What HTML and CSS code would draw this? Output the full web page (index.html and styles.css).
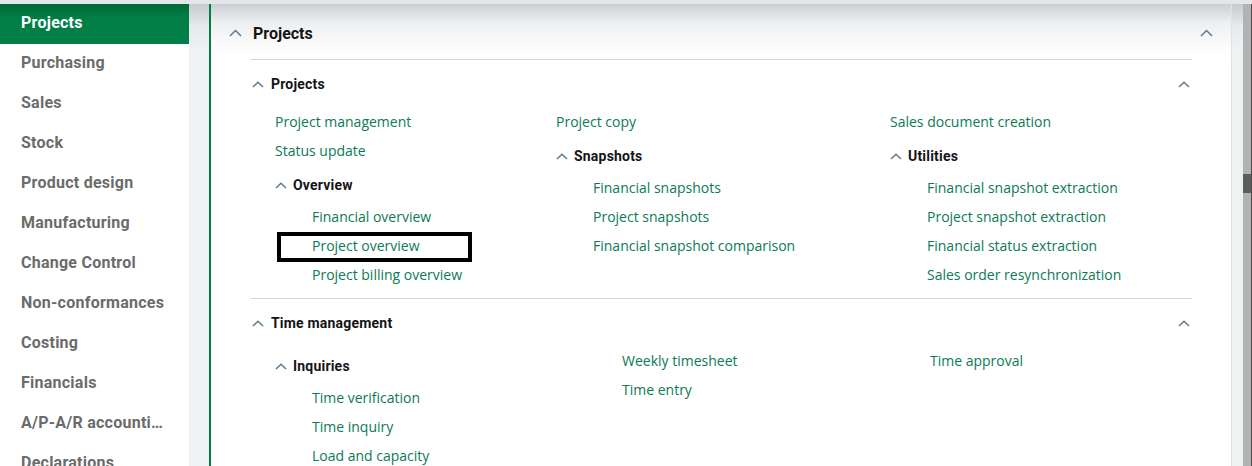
FILE: index.html
```html
<!DOCTYPE html>
<html lang="en">
<head>
    <meta charset="UTF-8">
    <meta name="viewport" content="width=device-width, initial-scale=1.0">
    <title>Projects</title>
    <link rel="stylesheet" href="styles.css">
</head>
<body>
    <div class="topbar"></div>
    <div class="app">
        <nav class="sidebar">
            <ul class="menu">
                <li class="menu-item active">Projects</li>
                <li class="menu-item">Purchasing</li>
                <li class="menu-item">Sales</li>
                <li class="menu-item">Stock</li>
                <li class="menu-item">Product design</li>
                <li class="menu-item">Manufacturing</li>
                <li class="menu-item">Change Control</li>
                <li class="menu-item">Non-conformances</li>
                <li class="menu-item">Costing</li>
                <li class="menu-item">Financials</li>
                <li class="menu-item">A/P-A/R accounting</li>
                <li class="menu-item">Declarations</li>
            </ul>
        </nav>

        <div class="workspace">
            <div class="panel">
                <div class="panel-header">
                    <svg class="chevron chevron-lg" viewBox="0 0 13 8"><polyline points="1,7 6.5,1.5 12,7"/></svg>
                    <span class="panel-title">Projects</span>
                    <svg class="chevron chevron-lg push-right" viewBox="0 0 13 8"><polyline points="1,7 6.5,1.5 12,7"/></svg>
                </div>

                <div class="panel-body">
                    <section class="module">
                        <div class="module-header">
                            <svg class="chevron" viewBox="0 0 12 7"><polyline points="1,6 6,1.2 11,6"/></svg>
                            <span class="module-title">Projects</span>
                            <svg class="chevron push-right" viewBox="0 0 12 7"><polyline points="1,6 6,1.2 11,6"/></svg>
                        </div>
                        <div class="module-grid grid-projects">
                            <div class="column">
                                <a class="link">Project management</a>
                                <a class="link">Status update</a>
                                <div class="group">
                                    <div class="group-header">
                                        <svg class="chevron" viewBox="0 0 12 7"><polyline points="1,6 6,1.2 11,6"/></svg>
                                        <span class="group-title">Overview</span>
                                    </div>
                                    <a class="link">Financial overview</a>
                                    <a class="link marked">Project overview</a>
                                    <a class="link">Project billing overview</a>
                                </div>
                            </div>
                            <div class="column">
                                <a class="link">Project copy</a>
                                <div class="group">
                                    <div class="group-header">
                                        <svg class="chevron" viewBox="0 0 12 7"><polyline points="1,6 6,1.2 11,6"/></svg>
                                        <span class="group-title">Snapshots</span>
                                    </div>
                                    <a class="link">Financial snapshots</a>
                                    <a class="link">Project snapshots</a>
                                    <a class="link">Financial snapshot comparison</a>
                                </div>
                            </div>
                            <div class="column">
                                <a class="link">Sales document creation</a>
                                <div class="group">
                                    <div class="group-header">
                                        <svg class="chevron" viewBox="0 0 12 7"><polyline points="1,6 6,1.2 11,6"/></svg>
                                        <span class="group-title">Utilities</span>
                                    </div>
                                    <a class="link">Financial snapshot extraction</a>
                                    <a class="link">Project snapshot extraction</a>
                                    <a class="link">Financial status extraction</a>
                                    <a class="link">Sales order resynchronization</a>
                                </div>
                            </div>
                        </div>
                    </section>

                    <section class="module">
                        <div class="module-header">
                            <svg class="chevron" viewBox="0 0 12 7"><polyline points="1,6 6,1.2 11,6"/></svg>
                            <span class="module-title">Time management</span>
                            <svg class="chevron push-right" viewBox="0 0 12 7"><polyline points="1,6 6,1.2 11,6"/></svg>
                        </div>
                        <div class="module-grid grid-time">
                            <div class="column">
                                <div class="group">
                                    <div class="group-header">
                                        <svg class="chevron" viewBox="0 0 12 7"><polyline points="1,6 6,1.2 11,6"/></svg>
                                        <span class="group-title">Inquiries</span>
                                    </div>
                                    <a class="link">Time verification</a>
                                    <a class="link">Time inquiry</a>
                                    <a class="link">Load and capacity</a>
                                </div>
                            </div>
                            <div class="column">
                                <a class="link">Weekly timesheet</a>
                                <a class="link">Time entry</a>
                            </div>
                            <div class="column">
                                <a class="link">Time approval</a>
                            </div>
                        </div>
                    </section>
                </div>
            </div>
        </div>

        <div class="scrollbar">
            <div class="scroll-thumb"></div>
        </div>
    </div>
</body>
</html>
```

FILE: styles.css
```css
body {
    margin: 0;
    padding: 0;
    width: 1252px;
    height: 466px;
    overflow: hidden;
    background-color: #ffffff;
    font-family: 'Open Sans', 'Noto Sans', sans-serif;
}
.topbar {
    height: 4px;
    background-color: #e3e7e9;
}
.app {
    display: flex;
    height: 462px;
}

/* Left navigation */
.sidebar {
    width: 189px;
    flex-shrink: 0;
    background-color: #ffffff;
}
.menu {
    list-style: none;
    margin: 0;
    padding: 0;
}
.menu-item {
    height: 40px;
    line-height: 38px;
    padding: 0 24px 2px 21px;
    box-sizing: border-box;
    font-family: Roboto, 'Liberation Sans', sans-serif;
    font-weight: 700;
    font-size: 16px;
    letter-spacing: 0.25px;
    color: #6b6b6b;
    white-space: nowrap;
    overflow: hidden;
    text-overflow: ellipsis;
}
.menu-item.active {
    background: linear-gradient(to bottom, #006a3b 0, #007e45 14px, #008048 100%);
    color: #ffffff;
}

/* Main area */
.workspace {
    flex: 1;
    display: flex;
    padding: 0 11px 0 20px;
    background: linear-gradient(to bottom, #c6cacd 0, #e6eaec 22px, #eef2f3 45px);
}
.panel {
    flex: 1;
    border-left: 2px solid #007e45;
    border-right: 1px solid #dde2e4;
    background-color: #ffffff;
}
.panel-header {
    display: flex;
    align-items: center;
    height: 52px;
    padding: 3px 18px 0 18px;
    background: linear-gradient(to bottom, #cbcfd2 0, #eceef0 18px, #fafafa 38px, #ffffff 55px);
}
.panel-title {
    margin-left: 11px;
    font-family: Roboto, 'Liberation Sans', sans-serif;
    font-weight: 700;
    font-size: 16px;
    color: #141414;
}
.chevron {
    width: 12px;
    height: 7px;
    flex-shrink: 0;
    fill: none;
    stroke: #5e7b8c;
    stroke-width: 1.5;
}
.chevron-lg {
    width: 13px;
    height: 8px;
}
.push-right {
    margin-left: auto;
}
.panel-body {
    padding: 0 39px 0 40px;
}
.module {
    border-top: 1px solid #cfd8dc;
    padding-bottom: 8px;
}
.module-header {
    display: flex;
    align-items: center;
    height: 48px;
    padding: 0 2px 0 1px;
}
.module-title {
    margin-left: 7px;
    font-family: Roboto, 'Liberation Sans', sans-serif;
    font-weight: 700;
    font-size: 14px;
    letter-spacing: 0.2px;
    color: #141414;
}
.module-grid {
    display: grid;
    padding-left: 24px;
}
.grid-projects {
    grid-template-columns: 281px 334px 1fr;
}
.grid-time {
    grid-template-columns: 347px 308px 1fr;
}
.group-header {
    display: flex;
    align-items: center;
    height: 36px;
    padding-top: 1px;
}
.group-title {
    margin-left: 6px;
    font-family: Roboto, 'Liberation Sans', sans-serif;
    font-weight: 700;
    font-size: 14px;
    letter-spacing: 0.2px;
    color: #141414;
}
.link {
    display: block;
    height: 29px;
    line-height: 28px;
    font-size: 14px;
    color: #0b7a55;
    white-space: nowrap;
    cursor: pointer;
}
.group .link {
    padding-left: 37px;
}
.link.marked {
    position: relative;
}
.link.marked::after {
    content: '';
    position: absolute;
    left: 2px;
    top: 0;
    width: 187px;
    height: 22px;
    border: 4px solid #000000;
}

/* Scrollbar */
.scrollbar {
    width: 8px;
    flex-shrink: 0;
    background-color: #b2b2b2;
    border-right: 1px solid #4a4a4a;
    padding-top: 170px;
}
.scroll-thumb {
    height: 19px;
    background-color: #5c5c5c;
}
```
